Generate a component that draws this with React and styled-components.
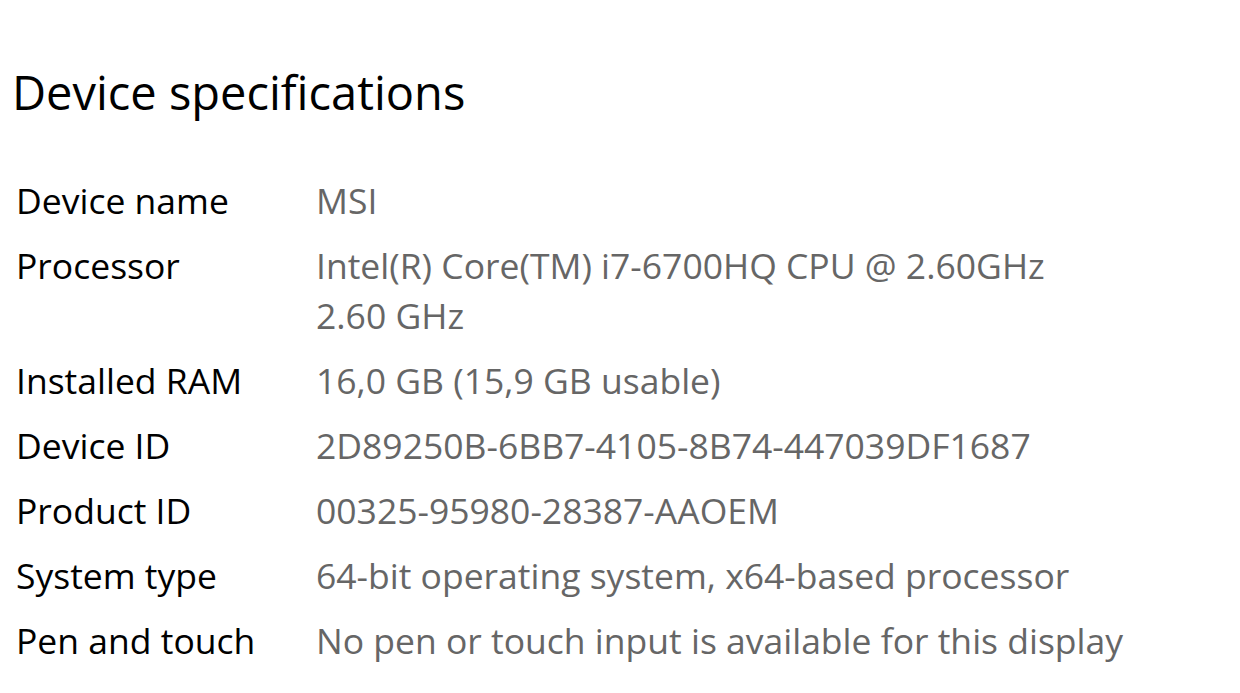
import React from 'react';
import styled, { createGlobalStyle } from 'styled-components';

const GlobalStyle = createGlobalStyle`
	html, body {
		margin: 0;
		padding: 0;
		background: #fff;
	}
	body {
		font-family: 'Open Sans', 'Noto Sans', sans-serif;
		color: #000;
	}
`;

const specs = [
	{ label: 'Device name', value: 'MSI' },
	{ label: 'Processor', value: 'Intel(R) Core(TM) i7-6700HQ CPU @ 2.60GHz 2.60\u00a0GHz' },
	{ label: 'Installed RAM', value: '16,0 GB (15,9 GB usable)' },
	{ label: 'Device ID', value: '2D89250B-6BB7-4105-8B74-447039DF1687' },
	{ label: 'Product ID', value: '00325-95980-28387-AAOEM' },
	{ label: 'System type', value: '64-bit operating system, x64-based processor' },
	{ label: 'Pen and touch', value: 'No pen or touch input is available for this display' },
];

const App = () => (
	<Page>
		<GlobalStyle />
		<Title>Device specifications</Title>
		<SpecList>
			{specs.map((s) => (
				<Row key={s.label}>
					<Label>{s.label}</Label>
					<Value>{s.value}</Value>
				</Row>
			))}
		</SpecList>
	</Page>
);

export default App;

const Page = styled.div`
	padding: 63px 0 0 16px;
	width: 1224px;
	height: 693px;
	box-sizing: border-box;
`;

const Title = styled.h1`
	margin: 0 0 0 -4px;
	font-size: 47px;
	font-weight: 400;
	line-height: 58px;
`;

const SpecList = styled.div`
	margin-top: 54px;
	display: flex;
	flex-direction: column;
	gap: 15px;
`;

const Row = styled.div`
	display: flex;
	align-items: flex-start;
	font-size: 35.5px;
	line-height: 50px;
`;

const Label = styled.div`
	width: 300px;
	flex-shrink: 0;
	color: #000;
`;

const Value = styled.div`
	width: 845px;
	color: #666;
`;
